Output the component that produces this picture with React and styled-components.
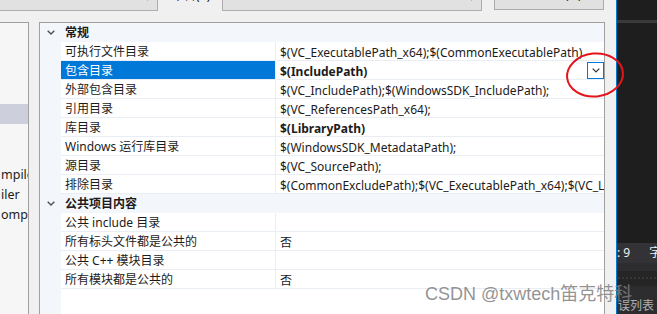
import React from 'react';
import styled, { createGlobalStyle } from 'styled-components';

const GlobalStyle = createGlobalStyle`
  html, body {
    margin: 0;
    padding: 0;
    width: 657px;
    height: 314px;
    overflow: hidden;
    background: #f0f0f0;
  }
  body {
    font-family: "Noto Sans", "Noto Sans CJK SC", sans-serif;
    font-size: 12px;
    color: #1b1b1b;
  }
`;

const sections = [
  {
    title: '常规',
    rows: [
      { name: '可执行文件目录', value: '$(VC_ExecutablePath_x64);$(CommonExecutablePath)' },
      { name: '包含目录', value: '$(IncludePath)', bold: true, selected: true },
      { name: '外部包含目录', value: '$(VC_IncludePath);$(WindowsSDK_IncludePath);' },
      { name: '引用目录', value: '$(VC_ReferencesPath_x64);' },
      { name: '库目录', value: '$(LibraryPath)', bold: true },
      { name: 'Windows 运行库目录', value: '$(WindowsSDK_MetadataPath);' },
      { name: '源目录', value: '$(VC_SourcePath);' },
      { name: '排除目录', value: '$(CommonExcludePath);$(VC_ExecutablePath_x64);$(VC_LibraryPath_x64)' },
    ],
  },
  {
    title: '公共项目内容',
    rows: [
      { name: '公共 include 目录', value: '' },
      { name: '所有标头文件都是公共的', value: '否' },
      { name: '公共 C++ 模块目录', value: '' },
      { name: '所有模块都是公共的', value: '否' },
    ],
  },
];

const treeItems = [
  { text: '', selected: true },
  { text: '' },
  { text: '' },
  { text: 'mpiler' },
  { text: 'iler' },
  { text: 'omp' },
];

function Chevron({ size = 8, color = '#505050', width = 1.4 }) {
  return (
    <svg width={size} height={size / 2 + 1} viewBox="0 0 8 5" fill="none">
      <path d="M0.7 0.7 L4 4 L7.3 0.7" stroke={color} strokeWidth={width} />
    </svg>
  );
}

function App() {
  return (
    <Screen>
      <GlobalStyle />
      <Dialog>
        <Toolbar>
          <Combo $width={178} $offset={-20}>
            <ComboArrow>
              <Chevron size={7} color="#222" />
            </ComboArrow>
          </Combo>
          <ToolbarLabel>平台(P):</ToolbarLabel>
          <Combo $width={260} $offset={0}>
            <ComboText>活动(x64)</ComboText>
            <ComboArrow>
              <Chevron size={7} color="#222" />
            </ComboArrow>
          </Combo>
          <ToolbarButton>配置管理器(O)...</ToolbarButton>
        </Toolbar>

        <Body>
          <Tree>
            {treeItems.map((item, i) => (
              <TreeItem key={i} $selected={item.selected}>
                {item.text}
              </TreeItem>
            ))}
          </Tree>

          <Grid>
            {sections.map((section) => (
              <React.Fragment key={section.title}>
                <Category>
                  <Gutter>
                    <Chevron />
                  </Gutter>
                  <CategoryTitle>{section.title}</CategoryTitle>
                </Category>
                {section.rows.map((row) => (
                  <Row key={row.name}>
                    <Gutter />
                    <NameCell $selected={row.selected}>{row.name}</NameCell>
                    <ValueCell $bold={row.bold}>
                      <ValueText>{row.value}</ValueText>
                      {row.selected && (
                        <DropButton>
                          <Chevron size={8} color="#333" width={1.2} />
                        </DropButton>
                      )}
                    </ValueCell>
                  </Row>
                ))}
              </React.Fragment>
            ))}
          </Grid>
        </Body>
      </Dialog>

      <Divider />

      <DarkPanel>
        <DarkTop />
        <DarkRule />
        <Editor />
        <StatusBar>
          <span>: 9</span>
          <span>字</span>
        </StatusBar>
        <DarkGap />
        <Dots />
        <ToolTabs>误列表</ToolTabs>
      </DarkPanel>

      <Annotation width="70" height="56" viewBox="0 0 70 56">
        <ellipse
          cx="35"
          cy="27"
          rx="28"
          ry="21.5"
          fill="none"
          stroke="#e3151c"
          strokeWidth="2"
          transform="rotate(-6 35 27)"
        />
      </Annotation>

      <Watermark>CSDN @txwtech笛克特科</Watermark>
    </Screen>
  );
}

const Screen = styled.div`
  position: relative;
  display: flex;
  width: 657px;
  height: 314px;
  overflow: hidden;
`;

const Dialog = styled.div`
  display: flex;
  flex-direction: column;
  width: 616px;
  flex-shrink: 0;
  background: #f0f0f0;
`;

const Toolbar = styled.div`
  display: flex;
  align-items: flex-start;
  height: 22px;
  flex-shrink: 0;
  overflow: hidden;
`;

const Combo = styled.div`
  box-sizing: border-box;
  display: flex;
  align-items: flex-start;
  flex-shrink: 0;
  width: ${(p) => p.$width}px;
  height: 24px;
  margin-top: -13px;
  margin-left: ${(p) => p.$offset}px;
  padding: 0 0 0 4px;
  background: #e1e1e1;
  border: 1px solid #adadad;
`;

const ComboText = styled.span`
  margin-top: -2px;
  line-height: 16px;
  white-space: nowrap;
`;

const ComboArrow = styled.span`
  display: flex;
  margin: 8px 6px 0 auto;
`;

const ToolbarLabel = styled.span`
  width: 50px;
  flex-shrink: 0;
  margin: -12px 0 0 14px;
  line-height: 16px;
  white-space: nowrap;
`;

const ToolbarButton = styled.div`
  box-sizing: border-box;
  flex-shrink: 0;
  width: 110px;
  height: 24px;
  margin: -14px 0 0 12px;
  padding: 0 0 0 10px;
  line-height: 16px;
  white-space: nowrap;
  background: #e1e1e1;
  border: 1px solid #adadad;
`;

const Body = styled.div`
  display: flex;
  flex: 1;
  min-height: 0;
`;

const Tree = styled.div`
  box-sizing: border-box;
  width: 29px;
  flex-shrink: 0;
  padding-top: 81px;
  overflow: hidden;
  background: #f6f6f6;
  border-top: 1px solid #a0a0a0;
  border-right: 1px solid #a0a0a0;
`;

const TreeItem = styled.div`
  height: 20px;
  padding-left: 1px;
  line-height: 22px;
  white-space: nowrap;
  overflow: hidden;
  background: ${(p) => (p.$selected ? '#cdd0dc' : 'transparent')};
  font-size: 12.5px;
`;

const Grid = styled.div`
  box-sizing: border-box;
  width: 566px;
  margin-left: 10px;
  flex-shrink: 0;
  overflow: hidden;
  border: 1px solid #a0a0a0;
  border-bottom: none;
  background: linear-gradient(to right, #f3f6fb 21px, #ffffff 21px);
`;

const Category = styled.div`
  display: flex;
  align-items: center;
  height: 19px;
  background: #f3f6fb;
`;

const CategoryTitle = styled.span`
  padding: 1px 0 0 4px;
  font-weight: 700;
  line-height: 18px;
`;

const Row = styled.div`
  display: grid;
  grid-template-columns: 21px 215px 1fr;
  height: 19px;
`;

const Gutter = styled.div`
  display: flex;
  align-items: center;
  justify-content: center;
  width: 21px;
  height: 19px;
  flex-shrink: 0;
  background: #f3f6fb;
`;

const NameCell = styled.div`
  box-sizing: border-box;
  height: 19px;
  padding: 2px 0 0 4px;
  line-height: 16px;
  white-space: nowrap;
  color: ${(p) => (p.$selected ? '#ffffff' : '#1b1b1b')};
  background: ${(p) => (p.$selected ? '#0078d7' : '#ffffff')};
  border-right: 1px solid #e9edf4;
  border-bottom: 1px solid #e9edf4;
`;

const ValueCell = styled.div`
  box-sizing: border-box;
  display: flex;
  align-items: center;
  min-width: 0;
  height: 19px;
  padding-left: 4px;
  overflow: hidden;
  font-weight: ${(p) => (p.$bold ? 700 : 400)};
  background: #ffffff;
  border-bottom: 1px solid #e9edf4;
`;

const ValueText = styled.span`
  flex: 1;
  min-width: 0;
  padding-top: 3px;
  line-height: 15px;
  white-space: nowrap;
  overflow: hidden;
`;

const DropButton = styled.span`
  box-sizing: border-box;
  display: flex;
  align-items: center;
  justify-content: center;
  width: 17px;
  height: 17px;
  flex-shrink: 0;
  background: #ffffff;
  border: 1px solid #0078d7;
`;

const Divider = styled.div`
  width: 1px;
  flex-shrink: 0;
  background: #007acc;
`;

const DarkPanel = styled.div`
  display: flex;
  flex-direction: column;
  flex: 1;
  background: #1e1e1e;
  color: #f1f1f1;
  overflow: hidden;
`;

const DarkTop = styled.div`
  height: 20px;
  background: #1e1e1e;
`;

const DarkRule = styled.div`
  height: 3px;
  background: #3a3a3d;
`;

const Editor = styled.div`
  height: 220px;
  background: #1e1e1e;
`;

const StatusBar = styled.div`
  display: flex;
  gap: 19px;
  height: 20px;
  line-height: 20px;
  white-space: nowrap;
  background: #333337;
  font-size: 12px;
`;

const DarkGap = styled.div`
  height: 8px;
  background: #2d2d30;
`;

const Dots = styled.div`
  height: 15px;
  background-color: #252526;
  background-image: radial-gradient(#4a4a4d 0.6px, transparent 0.8px);
  background-size: 4px 4px;
  background-position: 0 5px;
  background-repeat: repeat-x;
`;

const ToolTabs = styled.div`
  flex: 1;
  padding: 10px 0 0 1px;
  white-space: nowrap;
  color: #b0b0b0;
  background: #2d2d30;
`;

const Annotation = styled.svg`
  position: absolute;
  left: 560px;
  top: 48px;
  pointer-events: none;
`;

const Watermark = styled.div`
  position: absolute;
  left: 425px;
  top: 283px;
  font-family: "Liberation Sans", "Noto Sans CJK SC", sans-serif;
  font-size: 18px;
  line-height: 22px;
  white-space: nowrap;
  color: rgba(128, 128, 128, 0.85);
  pointer-events: none;
`;

export default App;
